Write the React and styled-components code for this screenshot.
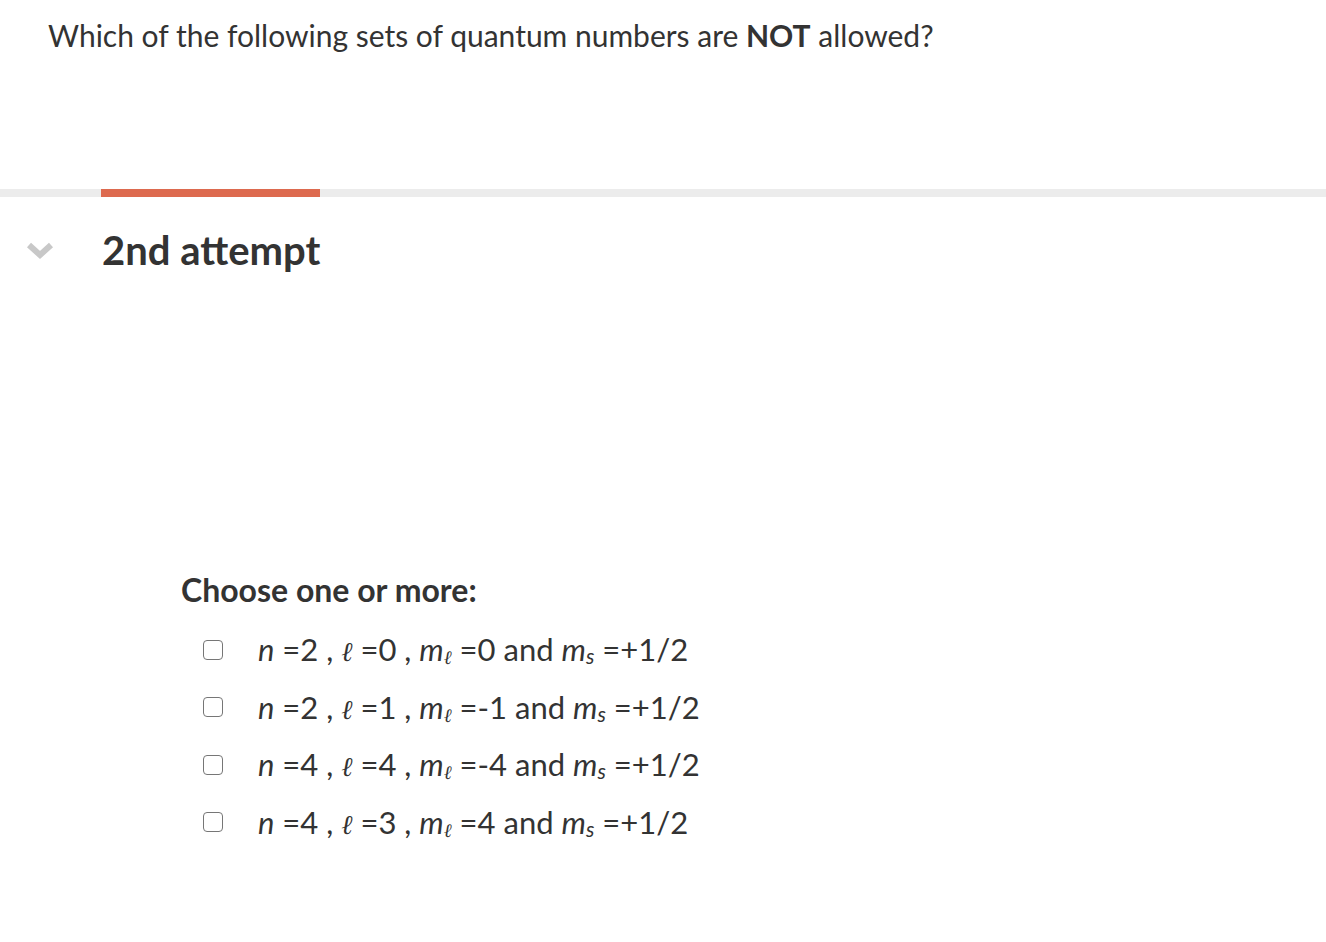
import React from 'react'
import styled, { createGlobalStyle } from 'styled-components'

const Global = createGlobalStyle`
  body {
    margin: 0;
    background: #fff;
    font-family: Lato, "Open Sans", sans-serif;
    color: #333;
  }
`

const Page = styled.div`
  width: 1326px;
  min-height: 942px;
`

const Question = styled.p`
  margin: 0;
  padding: 15px 0 0 48px;
  font-size: 30px;
  line-height: 40px;
  color: #333;
  strong { font-weight: 700; }
`

const Track = styled.div`
  margin-top: 134px;
  height: 8px;
  background: #ececec;
  display: flex;
`

const Fill = styled.div`
  margin-left: 101px;
  width: 219px;
  height: 100%;
  background: #dd6a4f;
`

const AttemptRow = styled.div`
  display: flex;
  align-items: center;
  padding: 28px 0 0 26px;
  gap: 48px;
`

const Chevron = styled.svg`
  width: 28px;
  height: 20px;
  flex: none;
`

const AttemptTitle = styled.h2`
  margin: 0;
  font-size: 40px;
  line-height: 50px;
  font-weight: 700;
  color: #333;
`

const Answers = styled.div`
  padding: 295px 0 0 181px;
`

const Prompt = styled.div`
  font-size: 32px;
  font-weight: 700;
  line-height: 40px;
  color: #333;
  margin-bottom: 11px;
`

const Option = styled.label`
  display: flex;
  align-items: center;
  height: 57.5px;
  padding-left: 22px;
  font-size: 31px;
  color: #333;
`

const Box = styled.span`
  width: 18px;
  height: 18px;
  border: 1.5px solid #767676;
  border-radius: 4px;
  flex: none;
  margin-right: 35px;
`

const Math = styled.span`
  white-space: pre;
  i { font-style: italic; }
  sub {
    font-size: 21px;
    font-style: italic;
    vertical-align: -3px;
  }
`

const Ell = styled.span`
  font-family: "DejaVu Serif", serif;
  font-style: italic;
  font-size: ${p => (p.$small ? '19px' : '27px')};
  font-weight: 300;
`

const options = [
  ['2', '0', '0'],
  ['2', '1', '-1'],
  ['4', '4', '-4'],
  ['4', '3', '4'],
]

export default function App() {
  return (
    <Page>
      <Global />
      <Question>
        Which of the following sets of quantum numbers are <strong>NOT</strong> allowed?
      </Question>
      <Track><Fill /></Track>
      <AttemptRow>
        <Chevron viewBox="0 0 28 20">
          <path d="M3 5 L14 15 L25 5" fill="none" stroke="#c8c8c8" strokeWidth="6" />
        </Chevron>
        <AttemptTitle>2nd attempt</AttemptTitle>
      </AttemptRow>
      <Answers>
        <Prompt>Choose one or more:</Prompt>
        {options.map(([n, l, m], i) => (
          <Option key={i}>
            <Box />
            <Math>
              <i>n</i> ={n} , <Ell>ℓ</Ell> ={l} , <i>m</i><sub><Ell $small>ℓ</Ell></sub> ={m} and <i>m</i><sub>s</sub> =+1/2
            </Math>
          </Option>
        ))}
      </Answers>
    </Page>
  )
}
